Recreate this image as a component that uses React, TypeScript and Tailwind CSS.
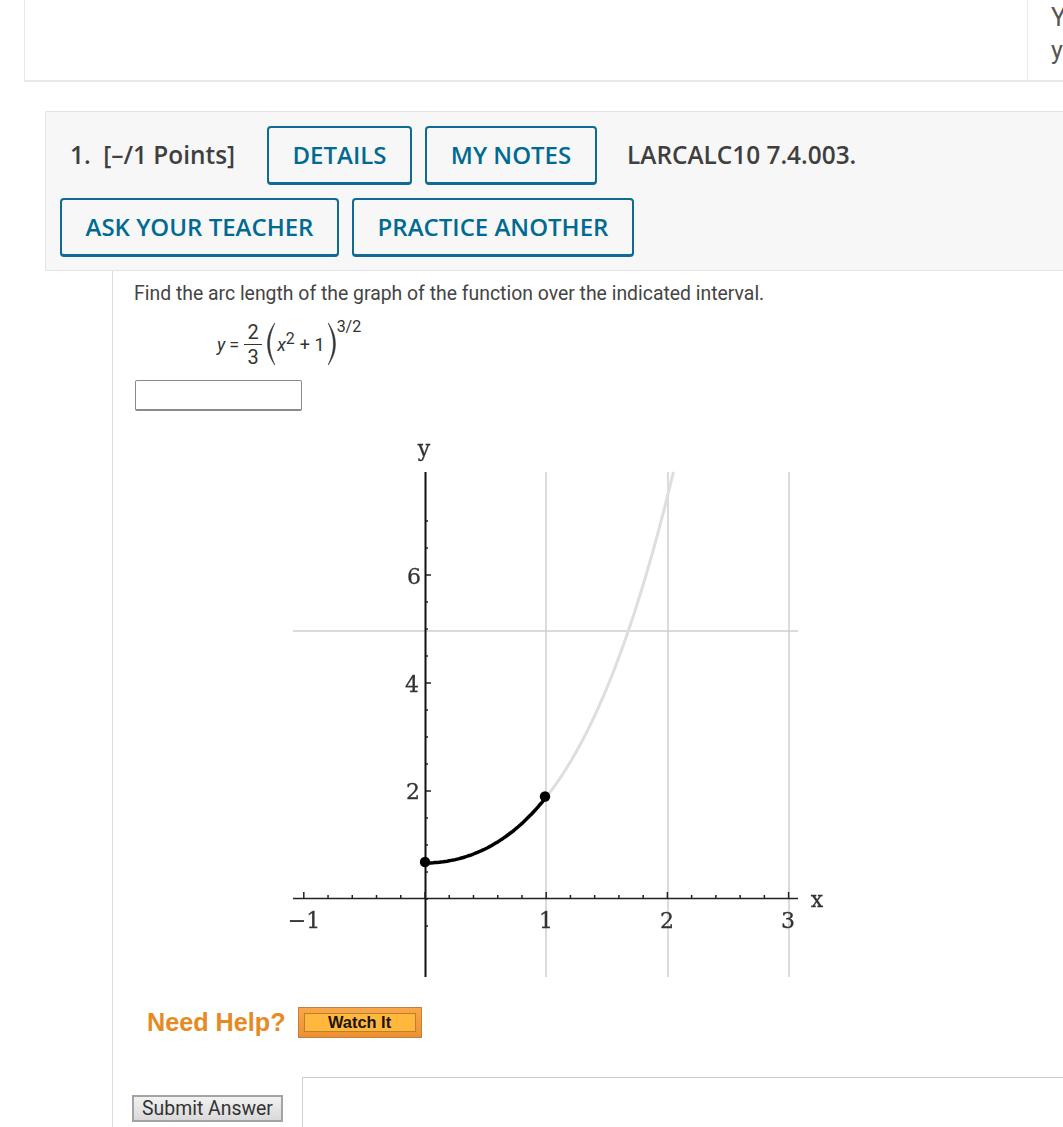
import React from "react";

const OX = 425;
const OY = 899;
const UX = 121.2;
const UY = 54;

const curve = (from: number, to: number) => {
  const pts: string[] = [];
  for (let i = 0; i <= 60; i++) {
    const x = from + ((to - from) * i) / 60;
    const y = (2 / 3) * Math.pow(x * x + 1, 1.5);
    pts.push(`${(OX + x * UX).toFixed(1)},${(OY - y * UY).toFixed(1)}`);
  }
  return pts.join(" ");
};

const xTicks = Array.from({ length: 21 }, (_, i) => i - 5);
const yTicks = Array.from({ length: 16 }, (_, i) => i - 1);

// graph image: svg viewBox uses page coordinates so numbers read off the picture directly
const Graph = () => (
  <svg width="560" height="550" viewBox="285 435 560 550" className="block blur-[0.4px]">
    <g stroke="#cfcfcf" strokeWidth="1.5">
      <line x1="546" y1="472" x2="546" y2="977" />
      <line x1="668" y1="472" x2="668" y2="977" />
      <line x1="789" y1="472" x2="789" y2="977" />
      <line x1="293" y1="631" x2="798" y2="631" />
    </g>
    <polyline points={curve(1, 2.05)} fill="none" stroke="#dedede" strokeWidth="3" />
    <line x1="293" y1="898.5" x2="798" y2="898.5" stroke="#222" strokeWidth="1.6" />
    <line x1="425.5" y1="472" x2="425.5" y2="977" stroke="#111" strokeWidth="2" />
    {xTicks.map((t) => (
      <line
        key={t}
        x1={OX + (t * UX) / 5}
        x2={OX + (t * UX) / 5}
        y1="898"
        y2={t % 5 === 0 ? 892 : 895}
        stroke="#222"
        strokeWidth="1.5"
      />
    ))}
    {yTicks.map((t) => (
      <line
        key={t}
        x1="426"
        x2={t > 0 && t % 4 === 0 ? 431 : 428}
        y1={OY - (t * UY) / 2}
        y2={OY - (t * UY) / 2}
        stroke="#222"
        strokeWidth="1.5"
      />
    ))}
    <polyline points={curve(0, 1)} fill="none" stroke="#000" strokeWidth="3.5" />
    <circle cx={OX} cy="862" r="5.2" fill="#000" />
    <circle cx="545" cy="796.5" r="5.2" fill="#000" />
    <g fontFamily="'DejaVu Serif', serif" fontSize="22" fill="#333" stroke="#333" strokeWidth="0.3" textAnchor="middle">
      <text x="424" y="456">y</text>
      <text x="414" y="584">6</text>
      <text x="412" y="692">4</text>
      <text x="413" y="799">2</text>
      <text x="304" y="928">−1</text>
      <text x="546" y="928">1</text>
      <text x="667" y="928">2</text>
      <text x="788" y="928">3</text>
      <text x="817" y="907">x</text>
    </g>
  </svg>
);

const Paren = ({ flip }: { flip?: boolean }) => (
  <svg width="10" height="44" viewBox="0 0 10 46" className={flip ? "block -scale-x-100" : "block"}>
    <path d="M9 1C3 10 1.5 16 1.5 23S3 36 9 45C5 36 3.5 30 3.5 23S5 10 9 1Z" fill="#333" stroke="#333" strokeWidth="0.6" />
  </svg>
);

const LinkButton = ({ label, className }: { label: string; className: string }) => (
  <button
    className={`h-[59px] rounded-[4px] border-2 border-b-[3px] border-[#0f6a94] bg-[#f7f7f7] text-[#006a92] font-['Open_Sans',sans-serif] text-[24px] font-[550] whitespace-nowrap ${className}`}
  >
    {label}
  </button>
);

export default function App() {
  return (
    <div className="w-[1063px] h-[1127px] overflow-hidden bg-white font-['Roboto',sans-serif] text-[#3a3a3a]">
      {/* top box, cut off by the window */}
      <div className="ml-[24px] h-[82px] flex justify-end border-l border-b-2 border-[#e8e8e8]">
        <div className="w-[36px] border-l border-[#e8e8e8] pl-[23px] pt-px text-[25px] leading-[33px] overflow-hidden text-[#555]">
          <div>Y</div>
          <div>y</div>
        </div>
      </div>

      {/* question header */}
      <div className="mt-[29px] ml-[45px] h-[160px] border-y border-l border-[#e4e4e4] rounded-l-[2px] bg-[#f7f7f7] pt-[14px] font-['Open_Sans',sans-serif] font-semibold text-[24.4px] text-[#3f3f3f]">
        <div className="flex items-center pl-[24px]">
          <span className="w-[197px] whitespace-pre">1.  [–/1 Points]</span>
          <LinkButton label="DETAILS" className="w-[145px]" />
          <span className="w-[13px]" />
          <LinkButton label="MY NOTES" className="w-[172px]" />
          <span className="ml-[30px] whitespace-nowrap">LARCALC10 7.4.003.</span>
        </div>
        <div className="flex gap-[13px] pl-[14px] mt-[13px]">
          <LinkButton label="ASK YOUR TEACHER" className="w-[279px]" />
          <LinkButton label="PRACTICE ANOTHER" className="w-[282px]" />
        </div>
      </div>

      {/* question body */}
      <div className="ml-[112px] border-l border-[#dedede] h-[856px]">
        <p className="pl-[21px] pt-[9px] text-[19.4px] leading-[28px] text-[#444]">
          Find the arc length of the graph of the function over the indicated interval.
        </p>

        <div className="ml-[104px] mt-[3px] h-[66px] flex items-center text-[#333] text-[18px]">
          <i>y</i>
          <span className="ml-[4px]">=</span>
          <span className="ml-[5px] flex flex-col items-center w-[18px] text-[20px] leading-[24px]">
            <span className="border-b border-[#333] w-full text-center">2</span>
            <span>3</span>
          </span>
          <span className="ml-[4px]"><Paren /></span>
          <i className="ml-px">x</i>
          <sup className="text-[16px] -top-[5px] relative not-italic">2</sup>
          <span className="ml-[5px]">+ 1</span>
          <span className="ml-[2px]"><Paren flip /></span>
          <span className="text-[16px] self-start mt-[4px]">3/2</span>
        </div>

        <div className="ml-[22px] mt-[3px] w-[167px] h-[31px] rounded-[2px] border border-b-2 border-[#8a8a8a] bg-white" />

        <div className="ml-[172px] mt-[24px]">
          <Graph />
        </div>

        <div className="flex items-center ml-[34px] mt-[22px]">
          <span className="font-['Liberation_Sans',sans-serif] font-bold text-[25.2px] leading-[31px] text-[#e68a22]">
            Need Help?
          </span>
          <div className="ml-[12px] w-[124px] h-[31px] p-[5px] border border-[#c08040] bg-gradient-to-b from-[#f8a848] to-[#ee9030]">
            <div className="h-full flex items-center justify-center border border-[#b98230] bg-[#ffb73e] font-['Liberation_Sans',sans-serif] font-bold text-[16.4px] text-[#1c1408]">
              Watch It
            </div>
          </div>
        </div>

        <div className="flex mt-[39px]">
          <div className="w-[189px] pt-[18px] pl-[19px]">
            <button className="w-[151px] h-[27px] border-2 border-[#a3a3a3] bg-gradient-to-b from-[#f2f2f2] to-[#d9d9d9] text-[19.4px] leading-none text-[#333]">
              Submit Answer
            </button>
          </div>
          <div className="flex-1 h-[60px] border-l border-t border-[#cfcfcf]" />
        </div>
      </div>
    </div>
  );
}
